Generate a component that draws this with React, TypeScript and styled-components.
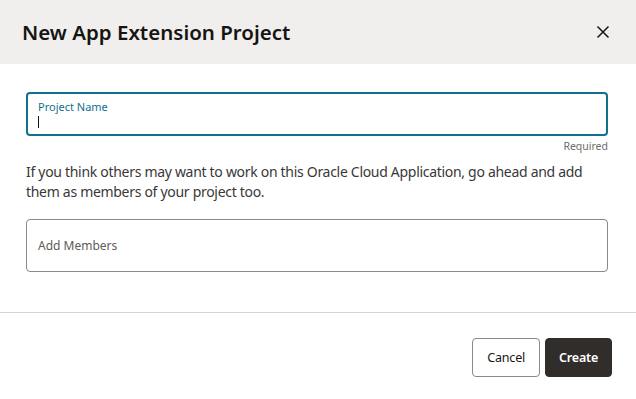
import React from "react";
import styled, { createGlobalStyle } from "styled-components";

const GlobalStyle = createGlobalStyle`
  html, body {
    margin: 0;
    padding: 0;
    background: #ffffff;
    font-family: "Noto Sans", "Open Sans", sans-serif;
  }
`;

const Dialog = styled.div`
  width: 636px;
  height: 399px;
  display: flex;
  flex-direction: column;
  background: #ffffff;
`;

const Header = styled.div`
  height: 64px;
  background: #f1efed;
  display: flex;
  align-items: center;
  justify-content: space-between;
  padding: 0 21px 0 22px;
  box-sizing: border-box;
`;

const Title = styled.h1`
  margin: 0;
  font-size: 20.5px;
  font-weight: 600;
  color: #161513;
  letter-spacing: 0;
`;

const CloseButton = styled.button`
  border: none;
  background: transparent;
  padding: 0;
  width: 24px;
  height: 24px;
  display: flex;
  align-items: center;
  justify-content: center;
  cursor: pointer;
`;

const Body = styled.div`
  padding: 28px 28px 0 26px;
  display: flex;
  flex-direction: column;
  flex: 1;
`;

const Field = styled.div<{ $focused?: boolean }>`
  height: ${(p) => (p.$focused ? "44px" : "53px")};
  box-sizing: border-box;
  border: ${(p) => (p.$focused ? "2px solid #12708f" : "1px solid #8b8885")};
  border-radius: 4px;
  padding: ${(p) => (p.$focused ? "6px 10px" : "0 11px")};
  display: flex;
  flex-direction: column;
  justify-content: ${(p) => (p.$focused ? "flex-start" : "center")};
`;

const FloatLabel = styled.span`
  font-size: 11px;
  color: #12708f;
  line-height: 14px;
`;

const Caret = styled.span`
  width: 1px;
  height: 15px;
  background: #161513;
  margin-top: 2px;
`;

const Placeholder = styled.span`
  font-size: 12px;
  color: #5e5b58;
`;

const Hint = styled.div`
  text-align: right;
  font-size: 10.5px;
  color: #6f6c69;
  margin-top: 3px;
`;

const Paragraph = styled.p`
  margin: 9px 0 17px 0;
  font-size: 14px;
  line-height: 20px;
  letter-spacing: -0.3px;
  color: #3a3836;
`;

const Divider = styled.hr`
  margin: 0;
  border: none;
  border-top: 1px solid #d6d3d0;
`;

const Footer = styled.div`
  display: flex;
  justify-content: flex-end;
  gap: 5px;
  padding: 25px 24px 22px 0;
`;

const Button = styled.button<{ $primary?: boolean }>`
  height: 39px;
  box-sizing: border-box;
  padding: ${(p) => (p.$primary ? "0 13px" : "0 14px")};
  border-radius: 4px;
  font-family: "Noto Sans", sans-serif;
  font-size: 12.5px;
  font-weight: ${(p) => (p.$primary ? 600 : 400)};
  letter-spacing: -0.2px;
  color: ${(p) => (p.$primary ? "#ffffff" : "#161513")};
  background: ${(p) => (p.$primary ? "#312d2a" : "#ffffff")};
  border: 1px solid ${(p) => (p.$primary ? "#312d2a" : "#8b8885")};
  cursor: pointer;
`;

export default function App() {
  return (
    <>
      <GlobalStyle />
      <Dialog>
        <Header>
          <Title>New App Extension Project</Title>
          <CloseButton aria-label="Close">
            <svg width="14" height="14" viewBox="0 0 14 14">
              <path d="M1.5 1.5 L12.5 12.5 M12.5 1.5 L1.5 12.5" stroke="#161513" strokeWidth="1.5" />
            </svg>
          </CloseButton>
        </Header>
        <Body>
          <Field $focused>
            <FloatLabel>Project Name</FloatLabel>
            <Caret />
          </Field>
          <Hint>Required</Hint>
          <Paragraph>
            If you think others may want to work on this Oracle Cloud Application, go ahead and add
            them as members of your project too.
          </Paragraph>
          <Field>
            <Placeholder>Add Members</Placeholder>
          </Field>
        </Body>
        <Divider />
        <Footer>
          <Button>Cancel</Button>
          <Button $primary>Create</Button>
        </Footer>
      </Dialog>
    </>
  );
}
